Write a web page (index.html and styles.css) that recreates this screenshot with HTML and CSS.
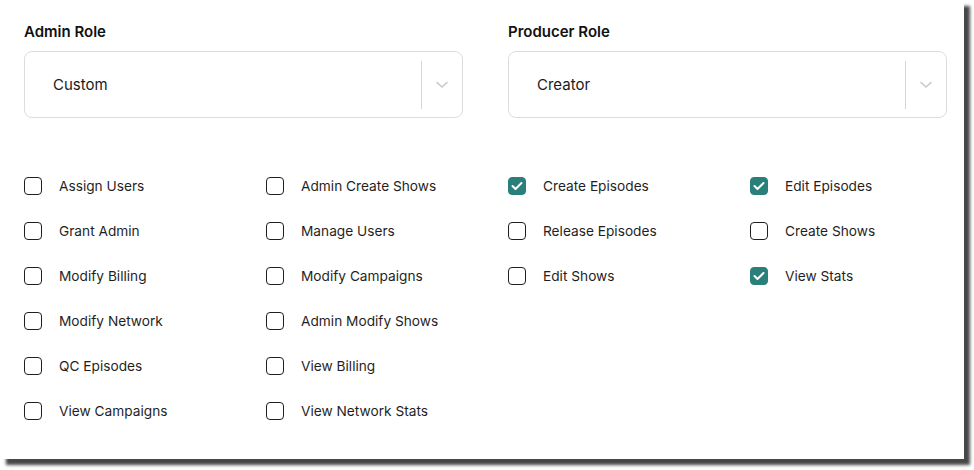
FILE: index.html
```html
<!DOCTYPE html>
<html>
<head>
<meta charset="utf-8">
<link rel="stylesheet" href="styles.css">
</head>
<body>
<div class="panel">
  <div class="roles">
    <div class="role">
      <div class="role-label">Admin Role</div>
      <div class="select">
        <span class="select-value">Custom</span>
        <span class="select-ind">
          <svg width="12" height="8" viewBox="0 0 12 8"><path d="M1 1.5 L6 6 L11 1.5" fill="none" stroke="#c8c8c8" stroke-width="1.6" stroke-linecap="round" stroke-linejoin="round"/></svg>
        </span>
      </div>
    </div>
    <div class="role">
      <div class="role-label">Producer Role</div>
      <div class="select">
        <span class="select-value">Creator</span>
        <span class="select-ind">
          <svg width="12" height="8" viewBox="0 0 12 8"><path d="M1 1.5 L6 6 L11 1.5" fill="none" stroke="#c8c8c8" stroke-width="1.6" stroke-linecap="round" stroke-linejoin="round"/></svg>
        </span>
      </div>
    </div>
  </div>
  <div class="perms">
    <div class="col">
      <label class="item"><span class="box"></span>Assign Users</label>
      <label class="item"><span class="box"></span>Grant Admin</label>
      <label class="item"><span class="box"></span>Modify Billing</label>
      <label class="item"><span class="box"></span>Modify Network</label>
      <label class="item"><span class="box"></span>QC Episodes</label>
      <label class="item"><span class="box"></span>View Campaigns</label>
    </div>
    <div class="col">
      <label class="item"><span class="box"></span>Admin Create Shows</label>
      <label class="item"><span class="box"></span>Manage Users</label>
      <label class="item"><span class="box"></span>Modify Campaigns</label>
      <label class="item"><span class="box"></span>Admin Modify Shows</label>
      <label class="item"><span class="box"></span>View Billing</label>
      <label class="item"><span class="box"></span>View Network Stats</label>
    </div>
    <div class="col">
      <label class="item"><span class="box checked"><svg width="12" height="10" viewBox="0 0 12 10"><path d="M1.5 5 L4.5 8 L10.5 2" fill="none" stroke="#fff" stroke-width="2" stroke-linecap="round" stroke-linejoin="round"/></svg></span>Create Episodes</label>
      <label class="item"><span class="box"></span>Release Episodes</label>
      <label class="item"><span class="box"></span>Edit Shows</label>
    </div>
    <div class="col">
      <label class="item"><span class="box checked"><svg width="12" height="10" viewBox="0 0 12 10"><path d="M1.5 5 L4.5 8 L10.5 2" fill="none" stroke="#fff" stroke-width="2" stroke-linecap="round" stroke-linejoin="round"/></svg></span>Edit Episodes</label>
      <label class="item"><span class="box"></span>Create Shows</label>
      <label class="item"><span class="box checked"><svg width="12" height="10" viewBox="0 0 12 10"><path d="M1.5 5 L4.5 8 L10.5 2" fill="none" stroke="#fff" stroke-width="2" stroke-linecap="round" stroke-linejoin="round"/></svg></span>View Stats</label>
    </div>
  </div>
</div>
</body>
</html>
```

FILE: styles.css
```css
html, body {
  margin: 0;
  padding: 0;
  background: #ffffff;
}
body {
  font-family: Inter, "Noto Sans", sans-serif;
  color: #1a1a1a;
  height: 470px;
}
.panel {
  box-sizing: border-box;
  width: 964px;
  height: 459px;
  background: #ffffff;
  padding: 21px 17px 0 24px;
  box-shadow: 6px 6px 3px rgba(0, 0, 0, 0.72);
}
.roles {
  display: flex;
  gap: 45px;
}
.role {
  width: 439px;
}
.role-label {
  font-size: 15px;
  font-weight: 600;
  line-height: 20px;
  margin-bottom: 10px;
  padding-top: 1px;
  height: 19px;
  color: #111;
}
.select {
  box-sizing: border-box;
  height: 67px;
  border: 1px solid #dcdcdc;
  border-radius: 8px;
  display: flex;
  align-items: center;
}
.select-value {
  flex: 1;
  padding-left: 28px;
  font-size: 15px;
  color: #1a1a1a;
}
.select-ind {
  width: 40px;
  height: 48px;
  border-left: 1px solid #d6d6d6;
  display: flex;
  align-items: center;
  justify-content: center;
}
.perms {
  display: grid;
  grid-template-columns: repeat(4, 242px);
  margin-top: 45px;
}
.col {
  display: flex;
  flex-direction: column;
}
.item {
  height: 45px;
  display: flex;
  align-items: center;
  font-size: 13.7px;
  color: #1f1f1f;
}
.box {
  box-sizing: border-box;
  width: 18px;
  height: 18px;
  border: 1.5px solid #1f1f1f;
  border-radius: 4px;
  margin-right: 17px;
  display: flex;
  align-items: center;
  justify-content: center;
  flex: none;
}
.box.checked {
  background: #2a7f7b;
  border-color: #2a7f7b;
}
```
